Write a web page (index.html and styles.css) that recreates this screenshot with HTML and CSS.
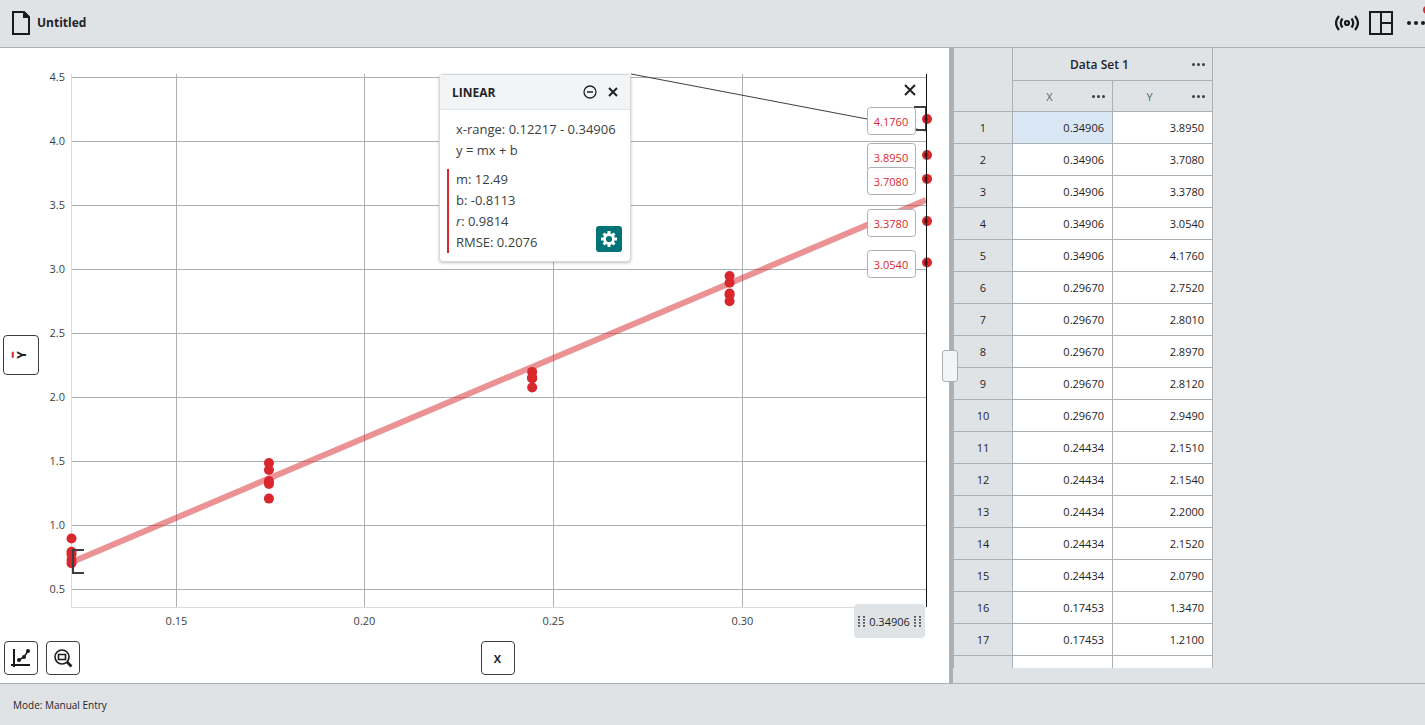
FILE: index.html
```html
<!DOCTYPE html>
<html lang="en">
  <head>
    <meta charset="UTF-8" />
    <meta name="viewport" content="width=device-width, initial-scale=1.0" />
    <title>Untitled</title>

    <link rel="stylesheet" href="styles.css">
  </head>
  <body>
    <header class="topbar">
      <button class="icon-btn file-btn">
        <svg width="18" height="24" viewBox="0 0 18 24" aria-hidden="true">
          <path d="M1 1H12L17 6V23H1Z" fill="none" stroke="#1a1a1a" stroke-width="2" />
          <path d="M11 1H13L17 5V7H11Z" fill="#1a1a1a" />
        </svg>
        <span>Untitled</span>
      </button>

      <div class="topbar-actions">
        <button class="icon-btn" aria-label="Sensors">
          <svg width="24" height="24" viewBox="0 0 24 24" fill="none" stroke="#1a1a1a" stroke-width="2.200" aria-hidden="true">
            <circle cx="12" cy="12" r="2" />
            <path d="M7.500 7.500Q4 12 7.500 16.500M16.500 7.500Q20 12 16.500 16.500M4 5Q-2 12 4 19M20 5Q26 12 20 19" />
          </svg>
        </button>
        <button class="icon-btn" aria-label="View options">
          <svg width="24" height="24" viewBox="0 0 24 24" fill="none" stroke="#1a1a1a" stroke-width="2" aria-hidden="true">
            <path d="M1 1H23V23H1ZM12 1V23M12 12H23" />
          </svg>
        </button>
        <button class="icon-btn more-btn" aria-label="More">
          <svg width="18" height="24" viewBox="0 0 18 24" fill="#1a1a1a" aria-hidden="true">
            <circle cx="2" cy="12" r="2" />
            <circle cx="9" cy="12" r="2" />
            <circle cx="16" cy="12" r="2" />
          </svg>
          <span class="badge"></span>
        </button>
      </div>
    </header>

    <main class="workspace">
      <section class="graph">
        <div class="y-axis">
          <button class="axis-btn y-btn" aria-label="Y axis">
            <span class="y-label"><span>Y</span><i class="y-mark"></i></span>
          </button>
        </div>

        <div class="plot">
          <svg class="plot-svg" viewBox="40 48 909 592">
            <g id="grid" class="grid"></g>
            <path class="frame" d="M71.500 74V607.500H926" />
            <g id="ticks" class="ticks"></g>
            <path class="fit" d="M72 562L926 200" />
            <path class="leader" d="M631 74L867 119L926 131" />
            <g id="points" class="points"></g>
            <path class="bracket" d="M84 550H73V573H84M914 107H926V130H914" />
            <path class="examine" d="M926.500 74V607" />
            <g id="tags" class="tags"></g>
          </svg>

          <button class="close-btn plot-close" aria-label="Close examine">
            <svg width="12" height="12" viewBox="0 0 12 12" aria-hidden="true">
              <path d="M1 1L11 11M11 1L1 11" stroke="#1f2326" stroke-width="2" />
            </svg>
          </button>

          <div class="fit-card">
            <div class="fit-head">
              <h2>LINEAR</h2>
              <button class="close-btn" aria-label="Collapse">
                <svg width="14" height="14" viewBox="0 0 14 14" fill="none" stroke="#1f2326" aria-hidden="true">
                  <circle cx="7" cy="7" r="6" stroke-width="1.300" />
                  <path d="M4 7H10" stroke-width="1.500" />
                </svg>
              </button>
              <button class="close-btn" aria-label="Close">
                <svg width="10" height="10" viewBox="0 0 10 10" aria-hidden="true">
                  <path d="M1 1L9 9M9 1L1 9" stroke="#1f2326" stroke-width="2" />
                </svg>
              </button>
            </div>
            <div class="fit-body">
              <p>x-range: 0.12217 - 0.34906</p>
              <p>y = mx + b</p>
              <div class="fit-values">
                <p>m: 12.49</p>
                <p>b: -0.8113</p>
                <p><em>r</em>: 0.9814</p>
                <p>RMSE: 0.2076</p>
              </div>
            </div>
            <button class="gear-btn" aria-label="Fit settings">
              <svg width="16" height="16" viewBox="0 0 16 16" aria-hidden="true">
                <circle cx="8" cy="8" r="4.500" fill="none" stroke="#fff" stroke-width="2.800" />
                <path d="M8 0V3M8 13V16M0 8H3M13 8H16M2.500 2.500L4.500 4.500M11.500 11.500L13.500 13.500M2.500 13.500L4.500 11.500M11.500 4.500L13.500 2.500" stroke="#fff" stroke-width="3" />
              </svg>
            </button>
          </div>

          <div class="x-handle">
            <svg width="7" height="11" viewBox="0 0 7 11" fill="none" stroke="#3a3f42" stroke-width="1.700" stroke-dasharray="1.700 1.300" aria-hidden="true">
              <path d="M1 0V11M6 0V11" />
            </svg>
            <span>0.34906</span>
            <svg width="7" height="11" viewBox="0 0 7 11" fill="none" stroke="#3a3f42" stroke-width="1.700" stroke-dasharray="1.700 1.300" aria-hidden="true">
              <path d="M1 0V11M6 0V11" />
            </svg>
          </div>
        </div>

        <div class="graph-tools">
          <div class="tool-group">
            <button class="axis-btn" aria-label="Graph tools">
              <svg width="20" height="20" viewBox="0 0 20 20" fill="none" stroke="#1a1a1a" aria-hidden="true">
                <path d="M3 1V19M0 17H19" stroke-width="2" />
                <path d="M8 12L13 9L17 3" stroke-width="1.500" />
                <g fill="#1a1a1a" stroke="none">
                  <circle cx="8" cy="12" r="2" />
                  <circle cx="13" cy="9" r="2" />
                  <circle cx="17" cy="3" r="2" />
                </g>
              </svg>
            </button>
            <button class="axis-btn" aria-label="Zoom to fit">
              <svg width="20" height="20" viewBox="0 0 20 20" fill="none" stroke="#1a1a1a" aria-hidden="true">
                <circle cx="9" cy="9" r="7" stroke-width="1.600" />
                <path d="M5.500 6.500H12.500V11.500H5.500Z" stroke-width="1.600" />
                <path d="M14 14L18.500 18.500" stroke-width="2.600" />
              </svg>
            </button>
          </div>
          <button class="axis-btn x-btn">X</button>
        </div>
      </section>

      <div class="splitter">
        <button class="splitter-handle" aria-label="Resize panes"></button>
      </div>

      <section class="data-pane">
        <table class="data-table">
          <thead>
            <tr class="set-row">
              <th class="corner" rowspan="2"></th>
              <th colspan="2">
                <div class="col-head set-head">
                  <span>Data Set 1</span>
                  <button class="dots-btn" aria-label="Data set options">
                    <svg width="13" height="3" viewBox="0 0 13 3" aria-hidden="true"><circle cx="1.500" cy="1.500" r="1.500" /><circle cx="6.500" cy="1.500" r="1.500" /><circle cx="11.500" cy="1.500" r="1.500" /></svg>
                  </button>
                </div>
              </th>
            </tr>
            <tr class="name-row">
              <th>
                <div class="col-head">
                  <span>X</span>
                  <button class="dots-btn" aria-label="X column options">
                    <svg width="13" height="3" viewBox="0 0 13 3" aria-hidden="true"><circle cx="1.500" cy="1.500" r="1.500" /><circle cx="6.500" cy="1.500" r="1.500" /><circle cx="11.500" cy="1.500" r="1.500" /></svg>
                  </button>
                </div>
              </th>
              <th>
                <div class="col-head">
                  <span>Y</span>
                  <button class="dots-btn" aria-label="Y column options">
                    <svg width="13" height="3" viewBox="0 0 13 3" aria-hidden="true"><circle cx="1.500" cy="1.500" r="1.500" /><circle cx="6.500" cy="1.500" r="1.500" /><circle cx="11.500" cy="1.500" r="1.500" /></svg>
                  </button>
                </div>
              </th>
            </tr>
          </thead>
          <tbody id="rows"></tbody>
        </table>
      </section>
    </main>

    <footer class="statusbar">
      <button class="mode-btn">Mode: Manual Entry</button>
    </footer>

    <script src="script.js"></script>
  </body>
</html>
```
FILE: styles.css
```css
* {
  box-sizing: border-box;
}

body {
  display: flex;
  flex-direction: column;
  height: 100vh;
  margin: 0;
  overflow: hidden;
  background-color: #dfe3e6;
  color: #1f2326;
  font-family: 'Open Sans', 'Noto Sans', sans-serif;
  font-size: 11px;
}

h2,
p {
  margin: 0;
}

button {
  font: inherit;
  color: inherit;
  cursor: pointer;
  padding: 0;
  border: 0;
  background-color: transparent;
}

svg {
  display: block;
}

/* Top bar */
.topbar {
  display: flex;
  flex: none;
  align-items: center;
  justify-content: space-between;
  height: 48px;
  padding: 0 0 2px 12px;
  border-bottom: 1px solid #abb0b4;
}

.icon-btn {
  display: flex;
  align-items: center;
}

.file-btn {
  gap: 7px;
  font-size: 12px;
  font-weight: 700;
}

.topbar-actions {
  display: flex;
  gap: 10px;
}

.more-btn {
  position: relative;
  margin-left: 4px;
}

.badge {
  position: absolute;
  top: -5px;
  right: -6px;
  width: 8px;
  height: 8px;
  border-radius: 50%;
  background-color: #d9272e;
}

/* Layout */
.workspace {
  display: grid;
  grid-template-columns: 1fr 4px 472px;
  flex: 1;
  min-height: 0;
}

.graph {
  display: grid;
  grid-template-columns: 40px 1fr;
  grid-template-rows: 1fr auto;
  min-width: 0;
  min-height: 0;
  background-color: #fff;
}

.y-axis {
  display: flex;
  align-items: center;
  padding: 22px 0 0 3px;
}

.axis-btn {
  display: flex;
  align-items: center;
  justify-content: center;
  width: 34px;
  height: 34px;
  border: 1px solid #3a3f42;
  border-radius: 4px;
  background-color: #fff;
}

.y-btn {
  width: 36px;
  height: 40px;
}

.y-label {
  display: flex;
  align-items: center;
  flex-direction: column-reverse;
  font-size: 12px;
  font-weight: 700;
  line-height: 16px;
  transform: rotate(-90deg);
}

.y-mark {
  width: 6px;
  height: 2px;
  background-color: #d9272e;
}

/* Plot */
.plot {
  position: relative;
  min-width: 0;
  min-height: 0;
}

.plot-svg {
  width: 100%;
  height: 100%;
}

.grid {
  stroke: #abb0b4;
  stroke-width: 1;
}

.frame {
  fill: none;
  stroke: #d9dcde;
}

.ticks {
  fill: #3a3f42;
  font-size: 11px;
}

.fit {
  stroke: #d9272e;
  stroke-width: 6;
  opacity: 0.5;
}

.leader {
  fill: none;
  stroke: #3a3f42;
}

.points {
  fill: #d9272e;
}

.bracket {
  fill: none;
  stroke: #3a3f42;
  stroke-width: 2;
}

.examine {
  stroke: #111;
}

.tags {
  fill: #d9272e;
  font-size: 11px;
}

.tags rect {
  fill: #fff;
  fill-opacity: 0.95;
  stroke: #abb0b4;
}

.tags .marker {
  fill: #3a0d10;
}

.close-btn {
  display: flex;
}

.plot-close {
  position: absolute;
  top: 36px;
  right: 33px;
}

.x-handle {
  position: absolute;
  right: 24px;
  bottom: 2px;
  display: flex;
  align-items: center;
  justify-content: space-between;
  width: 71px;
  height: 34px;
  padding: 0 4px;
  border-radius: 4px;
  background-color: #dfe3e6;
}

/* Curve fit card */
.fit-card {
  position: absolute;
  top: 26px;
  left: 399px;
  width: 192px;
  border: 1px solid #d4d8db;
  border-radius: 4px;
  background-color: #fff;
  box-shadow: 0 1px 3px rgba(0, 0, 0, 0.25);
}

.fit-head {
  display: flex;
  align-items: center;
  gap: 11px;
  height: 35px;
  padding: 0 12px;
  border-bottom: 1px solid #dfe3e6;
  background-color: #f2f4f6;
}

.fit-head h2 {
  flex: 1;
  font-size: 12px;
}

.fit-body {
  padding: 9px 7px 8px;
  font-size: 13px;
  line-height: 21px;
  color: #3a3f42;
}

.fit-body > p {
  padding-left: 9px;
}

.fit-values {
  margin-top: 8px;
  padding-left: 7px;
  border-left: 2px solid #d9272e;
}

.gear-btn {
  position: absolute;
  right: 8px;
  bottom: 9px;
  display: flex;
  align-items: center;
  justify-content: center;
  width: 26px;
  height: 26px;
  border-radius: 3px;
  background-color: #007376;
}

.graph-tools {
  display: grid;
  grid-template-columns: 1fr auto 1fr;
  grid-column: 1 / 3;
  padding: 1px 0 8px 4px;
}

.tool-group {
  display: flex;
  gap: 8px;
}

.x-btn {
  margin-left: 42px;
  font-weight: 700;
}

/* Splitter */
.splitter {
  display: flex;
  align-items: center;
  justify-content: center;
  background-color: #abb0b4;
}

.splitter-handle {
  position: relative;
  flex: none;
  width: 16px;
  height: 32px;
  margin-right: 2px;
  border: 1px solid #abb0b4;
  border-radius: 3px;
  background-color: #f2f4f6;
}

/* Data table */
.data-pane {
  min-height: 0;
  margin-bottom: 15px;
  overflow: hidden;
}

.data-table {
  border-collapse: separate;
  border-spacing: 0;
  border-left: 1px solid #abb0b4;
  table-layout: fixed;
  width: 260px;
}

.data-table th,
.data-table td {
  height: 32px;
  padding: 0;
  border-right: 1px solid #abb0b4;
  border-bottom: 1px solid #abb0b4;
}

.data-table th {
  font-weight: 400;
}

.data-table .set-row th {
  height: 33px;
}

.data-table .name-row th {
  height: 31px;
}

.data-table .corner {
  width: 59px;
}

.data-table td {
  padding-right: 8px;
  text-align: right;
  background-color: #fff;
}

.data-table td.selected {
  background-color: #d9e7f5;
}

.col-head {
  display: grid;
  grid-template-columns: 1fr 20px;
  align-items: center;
  color: #5c6266;
}

.col-head span {
  padding-right: 6px;
}

.set-head {
  font-size: 12px;
  font-weight: 600;
  color: #1f2326;
}

.dots-btn {
  padding: 6px 0;
}

.dots-btn svg {
  fill: #3a3f42;
}

/* Status bar */
.statusbar {
  display: flex;
  flex: none;
  align-items: center;
  height: 42px;
  padding-left: 13px;
  border-top: 1px solid #abb0b4;
  font-size: 10px;
}
```
FILE: script.js
```js
const data = [
  ['0.34906', '3.8950'],
  ['0.34906', '3.7080'],
  ['0.34906', '3.3780'],
  ['0.34906', '3.0540'],
  ['0.34906', '4.1760'],
  ['0.29670', '2.7520'],
  ['0.29670', '2.8010'],
  ['0.29670', '2.8970'],
  ['0.29670', '2.8120'],
  ['0.29670', '2.9490'],
  ['0.24434', '2.1510'],
  ['0.24434', '2.1540'],
  ['0.24434', '2.2000'],
  ['0.24434', '2.1520'],
  ['0.24434', '2.0790'],
  ['0.17453', '1.3470'],
  ['0.17453', '1.2100'],
  ['', '']
];

// Points further down than the last visible table row
const morePoints = [
  [0.17453, 1.488], [0.17453, 1.434], [0.17453, 1.325],
  [0.12217, 0.898], [0.12217, 0.795], [0.12217, 0.775], [0.12217, 0.73], [0.12217, 0.705]
];

// Data value to plot coordinate
const toX = x => 176.45 + (x - 0.15) * 3770.5;
const toY = y => 77.5 + (4.5 - y) * 128;

// Table rows
document.getElementById('rows').innerHTML = data.map(([x, y], i) => `
  <tr>
    <th scope="row">${x ? i + 1 : ''}</th>
    <td class="${i === 0 ? 'selected' : ''}">${x}</td>
    <td>${y}</td>
  </tr>
`).join('');

// Grid lines and tick labels
let grid = '';
let ticks = '';

for (let v = 0.5; v <= 4.5; v += 0.5) {
  grid += `<path d="M72 ${toY(v)}H926" />`;
  ticks += `<text x="65" y="${toY(v) + 3}" text-anchor="end">${v.toFixed(1)}</text>`;
}

for (const v of [0.15, 0.2, 0.25, 0.3]) {
  const x = Math.floor(toX(v)) + 0.5;
  grid += `<path d="M${x} 74V607" />`;
  ticks += `<text x="${x}" y="625" text-anchor="middle">${v.toFixed(2)}</text>`;
}

document.getElementById('grid').innerHTML = grid;
document.getElementById('ticks').innerHTML = ticks;

// Points
const points = data.filter(([x]) => x).concat(morePoints);

document.getElementById('points').innerHTML = points
  .map(([x, y]) => `<circle cx="${toX(x)}" cy="${toY(y)}" r="5" />`)
  .join('');

// Value tags for the examined column
const tags = [
  ['4.1760', 107], ['3.8950', 143], ['3.7080', 167], ['3.3780', 209], ['3.0540', 250]
];

document.getElementById('tags').innerHTML = tags.map(([value, top]) => `
  <rect x="867.5" y="${top + 0.5}" width="48" height="27" rx="3" />
  <text x="891" y="${top + 19}" text-anchor="middle">${value}</text>
  <ellipse class="marker" cx="926" cy="${toY(value)}" rx="1.5" ry="2.5" />
`).join('');
```
